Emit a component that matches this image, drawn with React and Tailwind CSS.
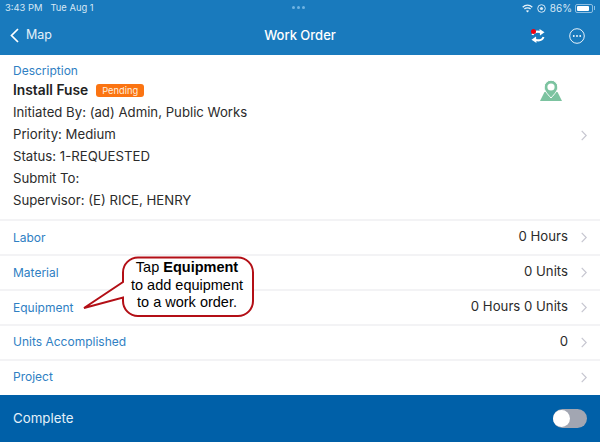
import React from "react";

const Chevron = () => (
  <svg width="6" height="11" viewBox="0 0 6 11" fill="none" className="shrink-0">
    <path d="M0.7 0.8 L5.2 5.5 L0.7 10.2" stroke="#c6c6d0" strokeWidth="1.2" />
  </svg>
);

const Row = ({ label, value, tight }) => (
  <div className="flex h-[35px] items-center border-t-2 border-[#f3f3f5] pl-[13px] pr-[13px]">
    <span className={`${tight ? "-mt-[1px]" : ""} text-[12px] text-[#2f80c3]`}>{label}</span>
    <span className="ml-auto -mt-[1px] text-[13.2px] text-[#2b2b2b]">{value}</span>
    <span className="ml-[13px] -mt-[1px] flex w-[6px]"><Chevron /></span>
  </div>
);

export default function App() {
  return (
    <div className="relative flex h-[442px] w-[600px] flex-col overflow-hidden bg-white font-['Inter','Liberation_Sans',sans-serif]">
      <header className="h-[55px] shrink-0 bg-[#197abd] text-white">
        <div className="relative flex h-[16px] items-center px-[5px] text-[9.4px] text-[#d7e8f5]">
          <span>3:43 PM</span>
          <span className="ml-[8px]">Tue Aug 1</span>
          <div className="absolute left-[292px] top-[6px] flex gap-[2px]">
            <i className="h-[3px] w-[3px] rounded-full bg-[#6fb3e2]" />
            <i className="h-[3px] w-[3px] rounded-full bg-[#6fb3e2]" />
            <i className="h-[3px] w-[3px] rounded-full bg-[#6fb3e2]" />
          </div>
          <div className="ml-auto flex items-center gap-[3px]">
            <svg width="11" height="9" viewBox="0 0 11 9" fill="none" stroke="#e8f2fa" strokeWidth="1.3">
              <path d="M0.7 3.2 C3.5 0.4 7.5 0.4 10.3 3.2" />
              <path d="M2.4 5 C4 3.5 7 3.5 8.6 5" />
              <path d="M5.5 8.5 L3.9 6.7 C4.8 6 6.2 6 7.1 6.7 Z" fill="#e8f2fa" stroke="none" />
            </svg>
            <svg width="9" height="9" viewBox="0 0 9 9" fill="none" stroke="#d7e8f5" className="ml-[1px]">
              <circle cx="4.5" cy="4.5" r="3.8" />
              <circle cx="4.5" cy="4.5" r="1.6" fill="#d7e8f5" stroke="none" />
            </svg>
            <span className="ml-[1px] text-[10px]">86%</span>
            <div className="flex items-center">
              <div className="h-[9px] w-[18px] rounded-[2px] border border-[#8dbfe3] p-[1px]">
                <div className="h-full w-[85%] rounded-[1px] bg-white" />
              </div>
              <div className="ml-[1px] h-[4px] w-[1px] bg-[#8dbfe3]" />
            </div>
          </div>
        </div>
        <div className="relative flex h-[39px] items-center pl-[10px] pr-[15px]">
          <svg width="9" height="15" viewBox="0 0 9 15" fill="none" stroke="#fff" strokeWidth="1.7">
            <path d="M8 1 L1.5 7.5 L8 14" />
          </svg>
          <span className="ml-[7px] text-[12.5px] text-[#e4f0f9]">Map</span>
          <span className="absolute left-0 right-0 text-center text-[13px] font-medium">Work Order</span>
          <div className="relative ml-auto mr-[24px] h-[14px] w-[14px]">
            <svg width="14" height="14" viewBox="0 0 14 14" fill="none" stroke="#fff" strokeWidth="2">
              <path d="M1.5 6 C2.5 3 6 2.2 9.5 3" />
              <path d="M8.5 0 L13.5 3.2 L9 6.5 Z" fill="#fff" stroke="none" />
              <path d="M12.5 8 C11.5 11 8 11.8 4.5 11" />
              <path d="M5.5 14 L0.5 10.8 L5 7.5 Z" fill="#fff" stroke="none" />
            </svg>
            <span className="absolute left-[0px] top-[0px] h-[5px] w-[5px] rounded-full bg-[#f00010]" />
          </div>
          <svg width="16" height="16" viewBox="0 0 16 16" fill="none" stroke="#e8f2fa" strokeWidth="1">
            <circle cx="8" cy="8" r="7.3" />
            <circle cx="4.8" cy="8" r="0.9" fill="#fff" stroke="none" />
            <circle cx="8" cy="8" r="0.9" fill="#fff" stroke="none" />
            <circle cx="11.2" cy="8" r="0.9" fill="#fff" stroke="none" />
          </svg>
        </div>
      </header>

      <main className="flex-1">
        <section className="relative h-[164px] pl-[13px] pt-[8px] text-[13.2px] leading-[22px] text-[#2b2b2b]">
          <div className="text-[12px] leading-[16px] text-[#2f80c3]">Description</div>
          <div className="flex h-[22px] items-center">
            <span className="text-[13.8px] font-semibold text-[#222]">Install Fuse</span>
            <span className="ml-[8px] rounded-[3px] bg-[#fb7412] px-[6px] text-[9.3px] leading-[13px] text-[#ffeede]">Pending</span>
          </div>
          <div>Initiated By: (ad) Admin, Public Works</div>
          <div>Priority: Medium</div>
          <div>Status: 1-REQUESTED</div>
          <div>Submit To:</div>
          <div>Supervisor: (E) RICE, HENRY</div>
          <svg width="22" height="21" viewBox="0 0 22 21" className="absolute left-[540px] top-[25px]">
            <path d="M0 21 L4.5 12 L17.5 12 L22 21 Z" fill="#7cc3a0" />
            <path d="M11 18 C7 13.5 4.2 10.5 4.2 7 A6.8 6.8 0 0 1 17.8 7 C17.8 10.5 15 13.5 11 18 Z" fill="#7cc3a0" stroke="#fff" strokeWidth="1" />
            <circle cx="11" cy="7" r="3.6" fill="#fff" />
          </svg>
          <span className="absolute left-[581px] top-[75px]"><Chevron /></span>
        </section>
        <Row label="Labor" value="0 Hours" />
        <Row label="Material" value="0 Units" />
        <Row label="Equipment" value="0 Hours 0 Units" />
        <Row label="Units Accomplished" value="0" tight />
        <Row label="Project" value="" tight />
      </main>

      <footer className="flex h-[47px] shrink-0 items-center justify-between bg-[#0060a8] pl-[13px] pr-[13px] text-[13.3px] text-[#e4f0f9]">
        <span>Complete</span>
        <div className="flex h-[19px] w-[34px] items-center rounded-full bg-[#a2a6b2]">
          <div className="h-[17px] w-[17px] rounded-full bg-white" />
        </div>
      </footer>

      <div className="absolute left-[81px] top-[254px] h-[66px] w-[174px]">
        <svg width="174" height="66" viewBox="0 0 174 66" className="absolute inset-0">
          <path
            d="M57 3.5 H157 A15 15 0 0 1 172 18.5 V47 A15 15 0 0 1 157 62 H57 A15 15 0 0 1 42 47 V43.5 L3 54 L42 28 V18.5 A15 15 0 0 1 57 3.5 Z"
            fill="#fff"
            stroke="#b30f16"
            strokeWidth="2"
          />
        </svg>
        <div className="absolute left-[42px] top-[5px] w-[128px] text-center font-['Liberation_Sans',sans-serif] text-[14.5px] leading-[17.5px] text-black">
          Tap <b>Equipment</b>
          <br />
          to add equipment
          <br />
          to a work order.
        </div>
      </div>
    </div>
  );
}
